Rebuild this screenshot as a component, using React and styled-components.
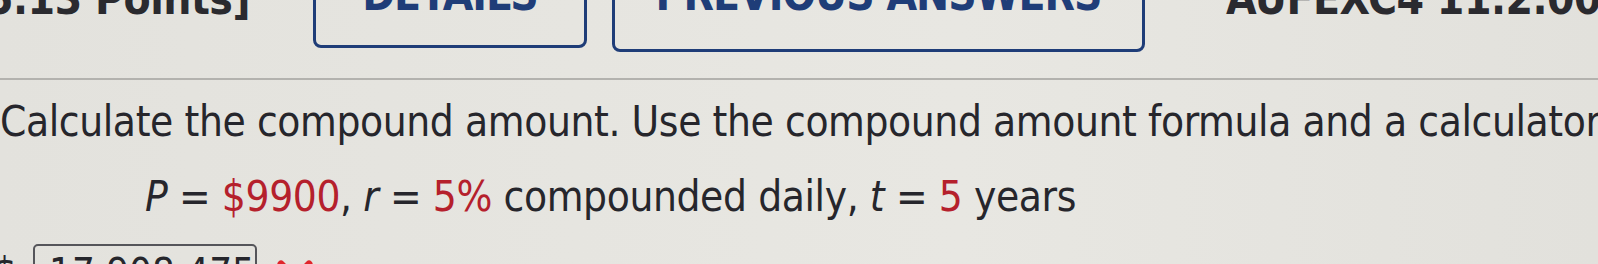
import styled, { createGlobalStyle } from 'styled-components'

const GlobalStyle = createGlobalStyle`
  html, body {
    margin: 0;
    padding: 0;
    background: #e4e3de;
    overflow: hidden;
  }
`

const Page = styled.div`
  width: 1598px;
  height: 264px;
  overflow: hidden;
  background: linear-gradient(90deg, #e3e2dd 0%, #e8e7e2 60%, #e2e1dc 100%);
  font-family: 'DejaVu Sans', Verdana, sans-serif;
  color: #26262c;
`

const TopBar = styled.div`
  height: 80px;
  border-bottom: 2px solid #b3b2ae;
  box-sizing: border-box;
  display: flex;
  align-items: flex-start;
  overflow: hidden;
`

const Heading = styled.div`
  width: ${({ $w }) => $w}px;
  flex: none;
  font-weight: bold;
  font-size: 44px;
  font-stretch: condensed;
  line-height: 44px;
  margin-top: -23px;
  margin-left: ${({ $ml }) => $ml}px;
  text-align: ${({ $align }) => $align || 'left'};
  white-space: nowrap;
  color: #2a2a2f;
  letter-spacing: -0.5px;
`

const Tab = styled.div`
  width: ${({ $w }) => $w}px;
  height: ${({ $h }) => $h}px;
  flex: none;
  margin-top: -40px;
  margin-left: ${({ $ml }) => $ml}px;
  box-sizing: border-box;
  border: 3px solid #1f3d78;
  border-radius: 8px;
  display: flex;
  justify-content: center;
  color: #1f3d78;
  font-weight: bold;
  font-size: 44px;
  font-stretch: condensed;
  line-height: 44px;
  padding-top: 10px;
  letter-spacing: -1px;
  white-space: nowrap;
`

const Body = styled.div`
  padding-top: 4px;
`

const Line = styled.div`
  font-size: 42px;
  font-stretch: condensed;
  line-height: 75px;
  white-space: nowrap;
  padding-left: ${({ $pl }) => $pl || 0}px;
  letter-spacing: -0.4px;
`

const Red = styled.span`
  color: #b5202c;
`

const Var = styled.i`
  font-style: italic;
`

const AnswerRow = styled.div`
  display: flex;
  align-items: flex-start;
  margin-top: 10px;
  height: 40px;
`

const Dollar = styled.span`
  font-size: 40px;
  line-height: 40px;
  margin-top: 8px;
  width: 41px;
  margin-left: -8px;
`

const Input = styled.div`
  width: 224px;
  height: 50px;
  box-sizing: border-box;
  border: 2px solid #55555a;
  border-radius: 5px;
  font-size: 40px;
  font-stretch: condensed;
  line-height: 40px;
  padding: 7px 0 0 14px;
  overflow: hidden;
  white-space: nowrap;
`

const Cross = styled.svg`
  flex: none;
  margin-left: 18px;
  margin-top: 14px;
`

export default function App() {
  return (
    <Page>
      <GlobalStyle />
      <TopBar>
        <Heading $ml={-14} $w={236} $align="right">5.13 Points]</Heading>
        <Tab $ml={91} $w={274} $h={88}>DETAILS</Tab>
        <Tab $ml={25} $w={533} $h={92}>PREVIOUS ANSWERS</Tab>
        <Heading $ml={81} $w={400}>AUFEXC4 11.2.006</Heading>
      </TopBar>
      <Body>
        <Line>Calculate the compound amount. Use the compound amount formula and a calculator.</Line>
        <Line $pl={145}>
          <Var>P</Var> = <Red>$9900</Red>, <Var>r</Var> = <Red>5%</Red> compounded daily, <Var>t</Var> = <Red>5</Red> years
        </Line>
        <AnswerRow>
          <Dollar>$</Dollar>
          <Input>17,908.475</Input>
          <Cross width="40" height="40" viewBox="0 0 40 40">
            <path d="M6 6 L34 34 M34 6 L6 34" stroke="#e0262c" strokeWidth="7" strokeLinecap="round" />
          </Cross>
        </AnswerRow>
      </Body>
    </Page>
  )
}
